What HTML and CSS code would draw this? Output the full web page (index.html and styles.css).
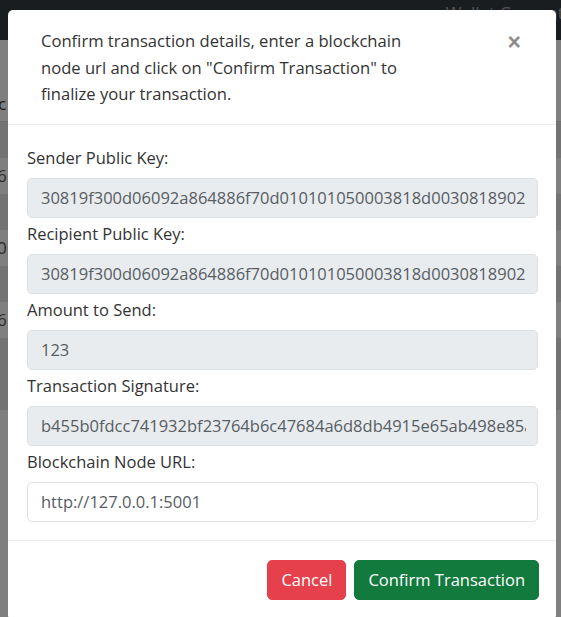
FILE: index.html
```html
<!DOCTYPE html>
<html lang="en">
<head>
<meta charset="utf-8">
<title>Confirm Transaction</title>
<link rel="stylesheet" href="styles.css">
</head>
<body>
<div class="page">
  <nav class="navbar"><span class="brand">Wallet Generator</span></nav>
  <div class="bg-table">
    <div class="bg-head">c</div>
    <div class="bg-row dark"></div>
    <div class="bg-row">6</div>
    <div class="bg-row dark"></div>
    <div class="bg-row">01</div>
    <div class="bg-row dark"></div>
    <div class="bg-row">6</div>
    <div class="bg-row dark"></div>
    <div class="bg-row dark"></div>
  </div>
</div>
<div class="backdrop"></div>
<div class="modal">
  <div class="dialog">
    <div class="modal-header">
      <h5 class="modal-title">Confirm transaction details, enter a blockchain node url and click on "Confirm Transaction" to finalize your transaction.</h5>
      <button class="close" type="button">&times;</button>
    </div>
    <div class="modal-body">
      <div class="group">
        <label class="label">Sender Public Key:</label>
        <input class="field" type="text" readonly value="30819f300d06092a864886f70d010101050003818d0030818902818100c4a3b1f0e9d27c5a">
      </div>
      <div class="group">
        <label class="label">Recipient Public Key:</label>
        <input class="field" type="text" readonly value="30819f300d06092a864886f70d010101050003818d0030818902818100b7e2d90c11a4f638">
      </div>
      <div class="group">
        <label class="label">Amount to Send:</label>
        <input class="field" type="text" readonly value="123">
      </div>
      <div class="group">
        <label class="label">Transaction Signature:</label>
        <input class="field" type="text" readonly value="b455b0fdcc741932bf23764b6c47684a6d8db4915e65ab498e85a3c1f07d92e4">
      </div>
      <div class="group">
        <label class="label">Blockchain Node URL:</label>
        <input class="field editable" type="text" value="http://127.0.0.1:5001">
      </div>
    </div>
    <div class="modal-footer">
      <button class="btn btn-danger" type="button">Cancel</button>
      <button class="btn btn-success" type="button">Confirm Transaction</button>
    </div>
  </div>
</div>
</body>
</html>
```

FILE: styles.css
```css
* { box-sizing: border-box; }

html, body {
  margin: 0;
  padding: 0;
  height: 100%;
  overflow: hidden;
}

body {
  font-family: "Open Sans", "Noto Sans", "Liberation Sans", sans-serif;
  background: #ffffff;
  color: #212529;
}

.page {
  display: flex;
  flex-direction: column;
  height: 100%;
}

.navbar {
  height: 40px;
  background: #343a40;
  display: flex;
  justify-content: flex-end;
  align-items: flex-start;
  padding: 1px 0 0 0;
}

.brand {
  color: rgba(255, 255, 255, 0.55);
  font-size: 17px;
  margin-right: -20px;
}

.bg-table {
  display: flex;
  flex-direction: column;
  padding-top: 52px;
}

.bg-head {
  height: 30px;
  font-size: 17px;
  color: #333;
  border-bottom: 1px solid #ddd;
  margin-left: -2px;
}

.bg-row {
  height: 36px;
  font-size: 17px;
  color: #555;
  line-height: 36px;
  margin-left: -3px;
  background: #ffffff;
}

.bg-row.dark {
  background: #e6e6e6;
}

.backdrop {
  position: fixed;
  inset: 0;
  background: rgba(0, 0, 0, 0.5);
}

.modal {
  position: fixed;
  inset: 0;
  overflow: hidden;
}

.dialog {
  margin: 10px 0 0 8px;
  width: 548px;
  background: #ffffff;
  border-radius: 5px;
  display: flex;
  flex-direction: column;
}

.modal-header {
  display: flex;
  justify-content: space-between;
  align-items: flex-start;
  padding: 18px 35px 16px 33px;
  border-bottom: 1px solid #e9ecef;
}

.modal-title {
  margin: 0;
  width: 385px;
  font-size: 16.6px;
  font-weight: 400;
  line-height: 26.5px;
  color: #333;
}

.close {
  border: 0;
  background: transparent;
  padding: 0;
  margin-top: 1px;
  font-family: "Liberation Sans", sans-serif;
  font-size: 23px;
  font-weight: 700;
  line-height: 26px;
  color: #000;
  opacity: 0.45;
}

.modal-body {
  display: flex;
  flex-direction: column;
  gap: 3px;
  padding: 20px 18px 18px 19px;
}

.group {
  display: flex;
  flex-direction: column;
}

.label {
  font-size: 16.5px;
  line-height: 25px;
  margin-bottom: 8px;
  color: #333;
}

.field {
  height: 40px;
  width: 100%;
  padding: 0 11px 0 13px;
  font-family: inherit;
  font-size: 16.5px;
  color: #575d63;
  background: #e9ecef;
  border: 1px solid #dcdfe3;
  border-radius: 5px;
  outline: none;
}

.field.editable {
  background: #ffffff;
  border-color: #dfe2e6;
}

.modal-footer {
  display: flex;
  justify-content: flex-end;
  gap: 8px;
  padding: 19px 17px 20px 18px;
  border-top: 1px solid #e9ecef;
}

.btn {
  height: 40px;
  padding: 0 13px;
  border: 1px solid transparent;
  border-radius: 5px;
  font-family: inherit;
  font-size: 16.5px;
  color: #ffffff;
}

.btn-danger {
  background: #e5404b;
  border-color: #e5404b;
}

.btn-success {
  background: #127a3d;
  border-color: #127a3d;
}
```
